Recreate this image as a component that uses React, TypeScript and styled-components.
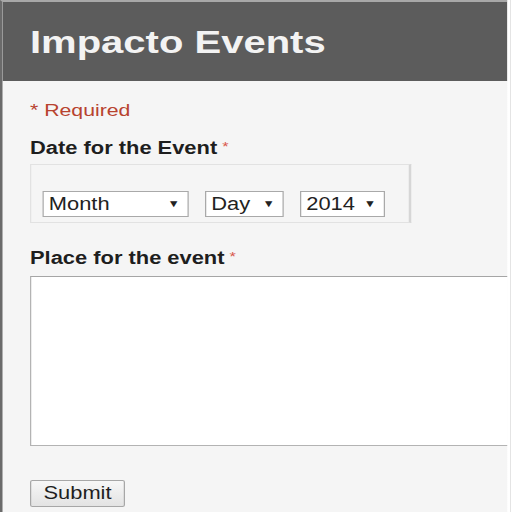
import React, { FunctionComponent, ReactElement } from 'react';
import styled, { createGlobalStyle } from 'styled-components';

// the reference shot is stretched sideways, so the form is laid out narrow and scaled out
const STRETCH = 1.25;

const GlobalStyle = createGlobalStyle`
    html, body {
        margin: 0;
        padding: 0;
        width: 512px;
        height: 512px;
        overflow: hidden;
        background: #ffffff;
    }
`;

const Stage = styled.div`
    width: ${512 / STRETCH}px;
    height: 512px;
    display: flex;
    transform: scaleX(${STRETCH});
    transform-origin: 0 0;
    font-family: 'Liberation Sans', Arial, sans-serif;
`;

const Panel = styled.div`
    width: 404px;
    height: 510px;
    flex: none;
    display: flex;
    flex-direction: column;
    overflow: hidden;
    background: #f5f5f5;
    border-left: 2px solid #6b6b6b;
    border-top: 2px solid #a8a8a8;
`;

const Gutter = styled.div`
    flex: 1;
    background: linear-gradient(to right, #ffffff 55%, #e4e4e4 55%, #e4e4e4 75%, #ffffff 75%);
`;

const Header = styled.header`
    height: 79px;
    flex: none;
    display: flex;
    align-items: center;
    padding-left: 22px;
    background: #5c5c5c;
`;

const Title = styled.h1`
    margin: 0;
    font-size: 32px;
    line-height: 32px;
    font-weight: bold;
    color: #f3f3f3;
`;

const Form = styled.form`
    display: flex;
    flex-direction: column;
    align-items: flex-start;
    padding: 21px 0 0 22px;
`;

const RequiredNote = styled.div`
    font-size: 17px;
    line-height: 17px;
    color: #b8432f;
`;

interface ILabel {
    top: number;
}

const Label = styled.div<ILabel>`
    margin-top: ${({ top }: ILabel): number => top}px;
    font-size: 17.5px;
    line-height: 17.5px;
    font-weight: bold;
    color: #1e1e1e;
    white-space: nowrap;
`;

const Star = styled.span`
    margin-left: 4px;
    font-size: 13px;
    line-height: 0;
    font-weight: normal;
    color: #d9564c;
    vertical-align: 3px;
`;

const DateBox = styled.div`
    box-sizing: border-box;
    width: 305px;
    height: 59px;
    margin-top: 6px;
    display: flex;
    align-items: flex-start;
    gap: 13px;
    padding: 26px 0 0 9px;
    border: 1px solid #e2e2e2;
    border-right: 2px solid #d6d6d6;
`;

interface ISelectWrap {
    w: number;
}

const SelectWrap = styled.span<ISelectWrap>`
    position: relative;
    display: block;
    width: ${({ w }: ISelectWrap): number => w}px;
    height: 26px;
    &::after {
        content: '▼';
        position: absolute;
        right: 7px;
        top: 8px;
        font-size: 10px;
        line-height: 10px;
        color: #222222;
        pointer-events: none;
    }
`;

const Select = styled.select`
    box-sizing: border-box;
    appearance: none;
    width: 100%;
    height: 26px;
    margin: 0;
    padding: 0 0 0 4px;
    border: 1px solid #a9a9a9;
    border-radius: 0;
    background: #ffffff;
    font-family: 'Liberation Sans', Arial, sans-serif;
    font-size: 17.5px;
    color: #222222;
`;

const Place = styled.textarea`
    box-sizing: border-box;
    width: 400px;
    height: 170px;
    margin-top: 9px;
    flex: none;
    resize: none;
    border: 1px solid #b3b3b3;
    border-top-color: #a5a5a5;
    background: #ffffff;
`;

const Submit = styled.button`
    box-sizing: border-box;
    width: 76px;
    height: 27px;
    margin-top: 34px;
    padding: 0;
    border: 1px solid #a7a7a7;
    border-radius: 2px;
    background: linear-gradient(#f7f7f7, #e3e3e3);
    font-family: 'Liberation Sans', Arial, sans-serif;
    font-size: 17.5px;
    color: #1e1e1e;
`;

const selects = [
    { name: 'month', value: 'Month', w: 117 },
    { name: 'day', value: 'Day', w: 63 },
    { name: 'year', value: '2014', w: 68 },
];

const App: FunctionComponent = (): ReactElement => (
    <>
        <GlobalStyle />
        <Stage>
            <Panel>
                <Header>
                    <Title>Impacto Events</Title>
                </Header>
                <Form>
                    <RequiredNote>* Required</RequiredNote>
                    <Label top={21}>
                        Date for the Event<Star>*</Star>
                    </Label>
                    <DateBox>
                        {selects.map(
                            (s): ReactElement => (
                                <SelectWrap key={s.name} w={s.w}>
                                    <Select name={s.name} defaultValue={s.value}>
                                        <option>{s.value}</option>
                                    </Select>
                                </SelectWrap>
                            )
                        )}
                    </DateBox>
                    <Label top={27}>
                        Place for the event<Star>*</Star>
                    </Label>
                    <Place />
                    <Submit type="button">Submit</Submit>
                </Form>
            </Panel>
            <Gutter />
        </Stage>
    </>
);

export default App;
